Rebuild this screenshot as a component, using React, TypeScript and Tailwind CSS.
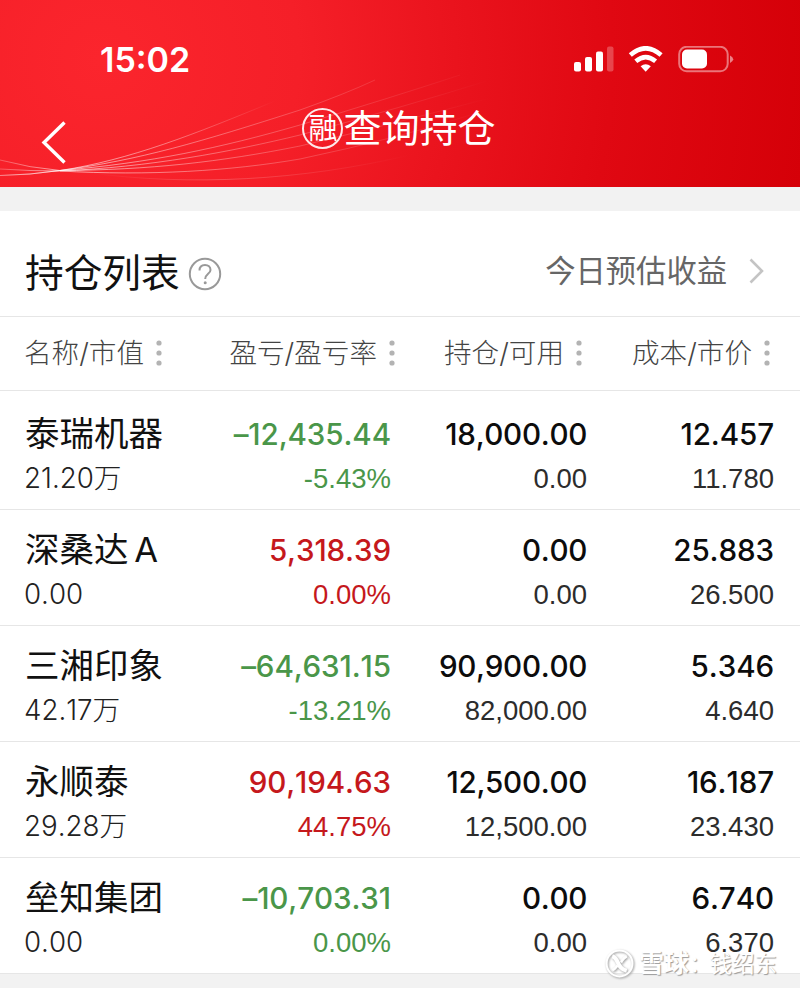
interface Holding {
  name: string;
  value: string;
  profit: string;
  rate: string;
  position: string;
  available: string;
  cost: string;
  price: string;
  color: string;
}

const holdings: Holding[] = [
  { name: '泰瑞机器', value: '21.20万', profit: '–12,435.44', rate: '-5.43%', position: '18,000.00', available: '0.00', cost: '12.457', price: '11.780', color: 'text-[#4a9649]' },
  { name: '深桑达 A', value: '0.00', profit: '5,318.39', rate: '0.00%', position: '0.00', available: '0.00', cost: '25.883', price: '26.500', color: 'text-[#c5181c]' },
  { name: '三湘印象', value: '42.17万', profit: '–64,631.15', rate: '-13.21%', position: '90,900.00', available: '82,000.00', cost: '5.346', price: '4.640', color: 'text-[#4a9649]' },
  { name: '永顺泰', value: '29.28万', profit: '90,194.63', rate: '44.75%', position: '12,500.00', available: '12,500.00', cost: '16.187', price: '23.430', color: 'text-[#c5181c]' },
  { name: '垒知集团', value: '0.00', profit: '–10,703.31', rate: '0.00%', position: '0.00', available: '0.00', cost: '6.740', price: '6.370', color: 'text-[#4a9649]' },
];

const columns = ['名称/市值', '盈亏/盈亏率', '持仓/可用', '成本/市价'];

function StatusIcons() {
  return (
    <svg width="160" height="28" viewBox="0 0 160 28" fill="none">
      <g fill="#fff">
        <rect x="0" y="16" width="7" height="9.500" rx="2" />
        <rect x="11" y="11" width="7" height="14.500" rx="2" />
        <rect x="22" y="5.500" width="7" height="20" rx="2" />
        <rect x="33" y="0.500" width="6.500" height="25" rx="2" opacity="0.25" />
      </g>
      <g stroke="#fff" strokeWidth="4.600">
        <path d="M56.300 9Q71.700 -4.400 87.100 9" />
        <path d="M61.800 15.300Q71.700 7 81.600 15.300" />
      </g>
      <path d="M66.600 20.300Q71.700 16 76.800 20.300L71.700 25.700Z" fill="#fff" />
      <rect x="105.200" y="0.800" width="48.500" height="24.500" rx="7.500" stroke="#fff" strokeOpacity="0.45" strokeWidth="2" />
      <rect x="108" y="3.500" width="25" height="19" rx="5" fill="#fff" />
      <path d="M156 9.500Q159.200 11 159.200 13.200Q159.200 15.500 156 17Z" fill="#fff" fillOpacity="0.5" />
    </svg>
  );
}

function Waves() {
  return (
    <svg className="absolute inset-0" width="800" height="187" viewBox="0 0 800 187" fill="none">
      <defs>
        <linearGradient id="fade" gradientUnits="userSpaceOnUse" x1="0" y1="0" x2="490" y2="0">
          <stop offset="0" stopColor="#fff" stopOpacity="0.25" />
          <stop offset="0.130" stopColor="#fff" stopOpacity="0.6" />
          <stop offset="0.350" stopColor="#fff" stopOpacity="0.4" />
          <stop offset="0.650" stopColor="#fff" stopOpacity="0.180" />
          <stop offset="1" stopColor="#fff" stopOpacity="0" />
        </linearGradient>
        <linearGradient id="fadeShort" gradientUnits="userSpaceOnUse" x1="60" y1="0" x2="275" y2="0">
          <stop offset="0" stopColor="#fff" stopOpacity="0.6" />
          <stop offset="0.500" stopColor="#fff" stopOpacity="0.400" />
          <stop offset="1" stopColor="#fff" stopOpacity="0" />
        </linearGradient>
        <linearGradient id="fadeLow" gradientUnits="userSpaceOnUse" x1="90" y1="0" x2="410" y2="0">
          <stop offset="0" stopColor="#fff" stopOpacity="0" />
          <stop offset="0.400" stopColor="#fff" stopOpacity="0.200" />
          <stop offset="1" stopColor="#fff" stopOpacity="0" />
        </linearGradient>
      </defs>
      <g stroke="url(#fade)" strokeWidth="1">
        <path d="M0 175.500Q30 175 60 170.500C140 160 200 142 300 110Q345 94 375 80" />
        <path d="M0 175.500Q30 175 60 170.500C150 163 220 148 300 125Q390 98 460 75" />
        <path d="M0 169Q30 171 60 171C150 167 230 152 300 135Q400 108 490 80" />
        <path d="M0 160Q30 168 60 170.500C150 170 220 162 300 146Q400 122 490 98" />
        <path d="M60 171C150 176 230 171 300 159Q400 138 480 112" />
      </g>
      <path d="M60 170.500C130 160 195 134 275 101" stroke="url(#fadeShort)" />
      <path d="M90 173C190 186 300 181 410 155" stroke="url(#fadeLow)" />
    </svg>
  );
}

function Dots() {
  return (
    <svg width="6" height="26" viewBox="0 0 6 26" fill="#b3b3b3">
      <circle cx="3" cy="3" r="2.600" />
      <circle cx="3" cy="13" r="2.600" />
      <circle cx="3" cy="23" r="2.600" />
    </svg>
  );
}

function HoldingRow({ item }: { item: Holding }) {
  return (
    <div className="grid h-[116px] shrink-0 grid-cols-[180px_186px_196px_187px] border-b border-[#e6e6e6] pl-[25px]">
      <div className="pt-[18px]">
        <div className="h-[44px] text-[34.5px] leading-[44px] text-[#111] [word-spacing:-4px]">{item.name}</div>
        <div className="-ml-px h-[44px] text-[27.7px] font-light leading-[44px] text-[#222] [font-kerning:none]">{item.value}</div>
      </div>
      <div className={`pt-[18px] text-right ${item.color}`}>
        <div className="h-[44px] text-[29.6px] font-medium leading-[44px] tracking-[-0.1px] [font-kerning:none]">{item.profit}</div>
        <div className="h-[44px] pt-px font-['Liberation_Sans'] text-[27.5px] leading-[44px]">{item.rate}</div>
      </div>
      <div className="pt-[18px] text-right">
        <div className="h-[44px] text-[29.6px] font-medium leading-[44px] tracking-[-0.3px] text-[#0c0c0c] [font-kerning:none]">{item.position}</div>
        <div className="h-[44px] pt-px font-['Liberation_Sans'] text-[27.5px] leading-[44px] text-[#2c2c2c]">{item.available}</div>
      </div>
      <div className="pt-[18px] text-right">
        <div className="h-[44px] text-[29.6px] font-medium leading-[44px] tracking-[-0.1px] text-[#0c0c0c] [font-kerning:none]">{item.cost}</div>
        <div className="h-[44px] pt-px font-['Liberation_Sans'] text-[27.5px] leading-[44px] text-[#2c2c2c]">{item.price}</div>
      </div>
    </div>
  );
}

export default function App() {
  return (
    <div className="relative flex h-[988px] w-[800px] flex-col overflow-hidden bg-[#f2f2f2] font-['Inter','Noto_Sans_CJK_SC',sans-serif]">
      <header className="relative h-[187px] shrink-0 bg-[radial-gradient(circle_at_100px_60px,#fb252d_0%,#f51f28_28%,#ea131d_50%,#e00812_72%,#d50008_100%)] text-white">
        <Waves />
        <div className="relative flex h-[92px] items-start justify-between pl-[100px] pr-[66px]">
          <span className="pt-[38px] text-[34px] font-semibold leading-[44px]">15:02</span>
          <div className="pt-[46px]">
            <StatusIcons />
          </div>
        </div>
        <div className="relative flex h-[72px] items-center justify-center">
          <svg className="absolute left-[40px] top-[27px]" width="28" height="46" viewBox="0 0 28 46" fill="none" stroke="#fff" strokeWidth="3.400">
            <path d="M24.500 3.500L4 23.500L24.500 43.500" />
          </svg>
          <div className="flex items-center pr-[2px]">
            <span className="flex size-[41px] items-center justify-center rounded-full border-2 border-white/90 text-[29px] leading-none">融</span>
            <span className="text-[38px] leading-[44px]">查询持仓</span>
          </div>
        </div>
      </header>

      <section className="mt-6 flex shrink-0 flex-col bg-white">
        <div className="flex h-[106px] items-center justify-between border-b border-[#e6e6e6] pl-[25px] pr-[36px] pt-[18px]">
          <div className="flex items-center gap-[8px]">
            <h1 className="text-[38.7px] leading-[50px] text-[#111]">持仓列表</h1>
            <svg className="mt-[3px]" width="34" height="34" viewBox="0 0 34 34" fill="none" stroke="#999" strokeWidth="2">
              <circle cx="17" cy="17" r="15.200" />
              <path d="M11.500 13.500C11.500 10 13.800 8 17 8C20.300 8 22.500 10 22.500 12.900C22.500 16.800 17.200 17 17.200 22" />
              <circle cx="17.200" cy="25.800" r="1.500" fill="#999" stroke="none" />
            </svg>
          </div>
          <div className="flex items-center gap-[22px] pb-[3px]">
            <span className="text-[30.3px] leading-[44px] text-[#666]">今日预估收益</span>
            <svg width="15" height="26" viewBox="0 0 15 26" fill="none" stroke="#c4c4c4" strokeWidth="2.600">
              <path d="M1.500 1.500L13 13L1.500 24.500" />
            </svg>
          </div>
        </div>

        <div className="grid h-[74px] grid-cols-[138px_233px_187px_188px] items-center border-b border-[#e6e6e6] pb-[2px] pl-[24px]">
          {columns.map((label) => (
            <div key={label} className="flex items-center justify-end gap-[12px] text-[27.6px] font-light text-[#444]">
              <span className="whitespace-nowrap leading-[40px]">{label}</span>
              <Dots />
            </div>
          ))}
        </div>

        <div className="flex flex-col pt-[3px]">
          {holdings.map((item) => (
            <HoldingRow key={item.name} item={item} />
          ))}
        </div>
      </section>

      {/* watermark */}
      <div className="absolute left-[605px] top-[946px] flex items-center gap-[4px] text-[22.5px] leading-[34px] text-white [text-shadow:1px_1px_1px_#999]">
        <svg width="30" height="30" viewBox="0 0 29 29" fill="none" className="drop-shadow-[1px_1px_1px_#999]">
          <circle cx="14" cy="14" r="12.500" stroke="#fff" strokeWidth="2" />
          <path d="M7 7C14 9 11 19 21 21" stroke="#fff" strokeWidth="4" />
          <path d="M21 7C17 9 17 11 15.500 13M12 16C10.500 18 9.500 19.500 7 20.500" stroke="#fff" strokeWidth="2.500" />
        </svg>
        <span className="whitespace-nowrap">
          <b className="text-[25px] font-bold">雪球</b>
          <span className="-mr-[2px]">：</span>钱绍东
        </span>
      </div>
    </div>
  );
}
